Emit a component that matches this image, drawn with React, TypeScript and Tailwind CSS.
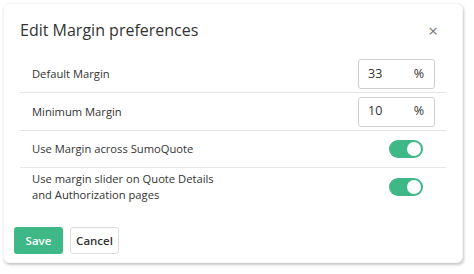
import React, { useState } from 'react';

interface Pref {
  label: string[];
  kind: 'input' | 'toggle';
  value?: string;
}

const prefs: Pref[] = [
  { label: ['Default Margin'], kind: 'input', value: '33' },
  { label: ['Minimum Margin'], kind: 'input', value: '10' },
  { label: ['Use Margin across SumoQuote'], kind: 'toggle' },
  { label: ['Use margin slider on Quote Details', 'and Authorization pages'], kind: 'toggle' },
];

const Toggle: React.FC<{ on: boolean; onClick: () => void }> = ({ on, onClick }) => (
  <button
    onClick={onClick}
    className={`w-[34px] h-[18px] rounded-full flex items-center px-[2px] ${on ? 'bg-[#3db886] justify-end' : 'bg-gray-300 justify-start'}`}
  >
    <span className="w-[14px] h-[14px] rounded-full bg-white"></span>
  </button>
);

const App: React.FC = () => {
  const [toggles, setToggles] = useState<boolean[]>([true, true]);

  return (
    <div className="w-[474px] h-[274px] bg-white p-[3px]" style={{ fontFamily: '"Open Sans", sans-serif' }}>
      <div className="w-[460px] h-[260px] rounded-md bg-white border border-gray-100 shadow-[1px_2px_3px_rgba(0,0,0,0.22)] flex flex-col">
        {/* Header */}
        <div className="flex items-center justify-between pl-[16px] pr-[24px] pt-[6px] h-[46px]">
          <h2 className="text-[16px] text-[#333]">Edit Margin preferences</h2>
          <span className="text-[17px] text-[#777] leading-none">×</span>
        </div>

        {/* Rows */}
        <div className="mx-[16px] mt-[6px]">
          {prefs.map((p, i) => (
            <div
              key={i}
              className={`flex items-center justify-between pl-[12px] pr-[11px] ${i < 3 ? 'border-b border-[#e6e6e6]' : ''} ${i === 1 ? 'h-[38px]' : i === 3 ? 'h-[38px]' : 'h-[37px]'}`}
            >
              <div className="text-[11.2px] text-[#333] leading-[16px]">
                {p.label.map(l => (
                  <div key={l}>{l}</div>
                ))}
              </div>
              {p.kind === 'input' ? (
                <div className="w-[77px] h-[30px] border border-[#cfcfcf] rounded-[3px] flex items-center justify-between pl-[9px] pr-[10px] text-[12.5px] text-[#333]">
                  <span>{p.value}</span>
                  <span>%</span>
                </div>
              ) : (
                <div className="mr-[12px]">
                  <Toggle
                    on={toggles[i - 2]}
                    onClick={() => setToggles(t => t.map((v, j) => (j === i - 2 ? !v : v)))}
                  />
                </div>
              )}
            </div>
          ))}
        </div>

        {/* Footer */}
        <div className="flex gap-[7px] pl-[10px] mt-auto mb-[8px]">
          <button className="w-[49px] h-[27px] rounded-[3px] bg-[#3db886] text-white text-[11.5px] font-semibold">Save</button>
          <button className="w-[49px] h-[27px] rounded-[3px] bg-white border border-[#ddd] text-[#333] text-[11.5px] font-semibold">Cancel</button>
        </div>
      </div>
    </div>
  );
};

export default App;
